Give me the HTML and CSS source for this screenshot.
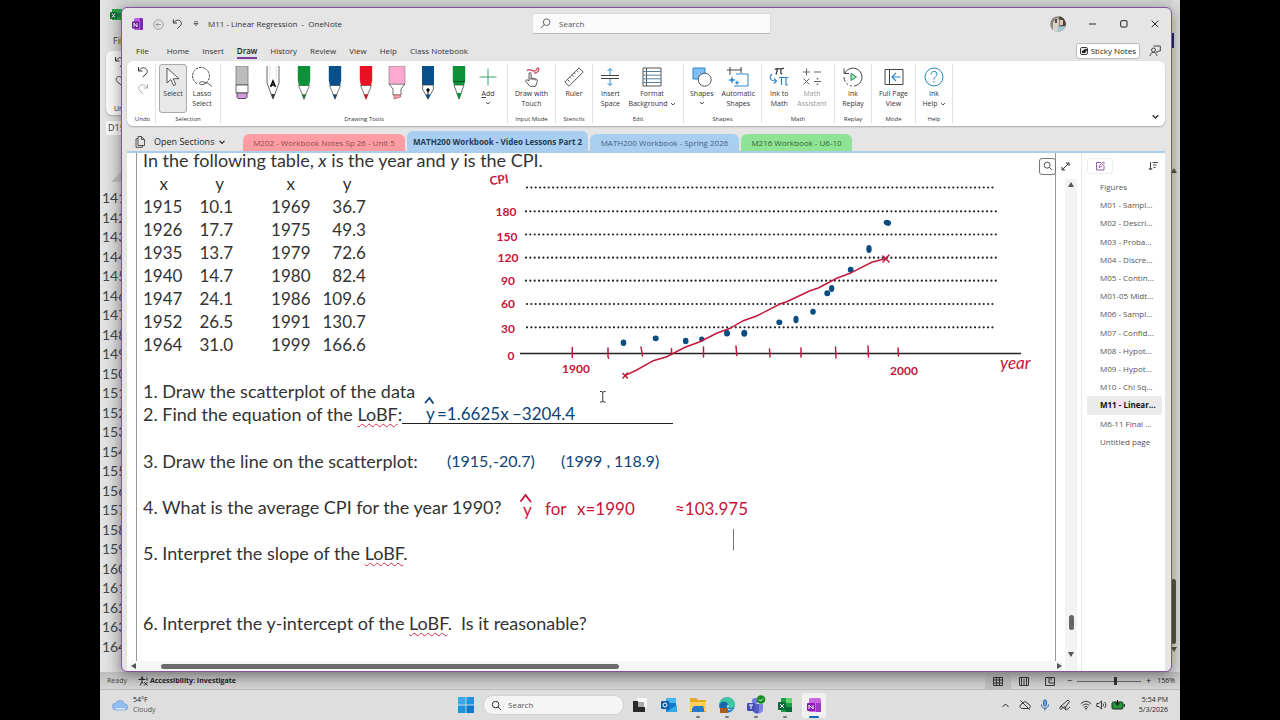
FILE: index.html
```html
<!DOCTYPE html>
<html lang="en">
<head>
<meta charset="utf-8">
<title>M11 - Linear Regression - OneNote</title>
<link rel="stylesheet" href="styles.css">
</head>
<body>
<svg class="defs" width="0" height="0" aria-hidden="true">
  <symbol id="pen" viewBox="0 0 14 34">
    <path d="M1.500 19.500L7 32.500l5.500-13z" fill="#fff" stroke="#555" stroke-width=".8"/>
    <path d="M.8 0h12.400v14.500l-1.200 5H2L.8 14.500z" fill="currentColor"/>
    <path d="M5 28.500h4L7 33.500z" fill="currentColor" stroke="#333" stroke-width=".3"/>
  </symbol>
  <symbol id="chev" viewBox="0 0 8 8"><path d="M1.500 2.800L4 5.300l2.500-2.500" fill="none" stroke="currentColor" stroke-width="1.200"/></symbol>
  <symbol id="undo" viewBox="0 0 12 12"><path d="M1.500 1v4h4M1.800 4.800C4 1.500 7 1 9 2.800s1.500 3.700 0 5.200L5.800 11" fill="none" stroke="currentColor"/></symbol>
  <symbol id="lens" viewBox="0 0 12 12"><circle cx="5" cy="5" r="3.600" fill="none" stroke="currentColor"/><path d="M7.700 7.700L11 11" stroke="currentColor"/></symbol>
</svg>

<div class="desktop">
  <section class="excel" aria-label="Excel">
    <div class="excel-edge">
      <svg class="excel-logo" viewBox="0 0 12 12"><path d="M2 0h9a1 1 0 011 1v10H2z" fill="#27a345"/><path d="M2 4h10v4H2z" fill="#138038"/><rect y="3" width="7" height="7" rx="1" fill="#0b6630"/><path d="M2 4.500l3 4M5 4.500l-3 4" stroke="#fff"/></svg>
      <span class="excel-file">File</span>
      <div class="excel-ribbon">
        <svg width="12" height="12"><use href="#undo"/></svg>
        <svg width="12" height="12" viewBox="0 0 12 12"><path d="M11 9L7 11 3 7.500C1 5 3 2 5.500 2.500L9 4" fill="none" stroke="#444"/></svg>
        <span>Undo</span>
      </div>
      <div class="excel-name">D155</div>
      <svg class="corner" width="10" height="10" viewBox="0 0 10 10"><path d="M10 0v10H0z" fill="#bdbdbd"/></svg>
    </div>
    <ol class="rows">
      <li>141</li><li>142</li><li>143</li><li>144</li><li>145</li><li>146</li><li>147</li><li>148</li><li>149</li><li>150</li><li>151</li><li>152</li><li>153</li><li>154</li><li>155</li><li>156</li><li>157</li><li>158</li><li>159</li><li>160</li><li>161</li><li>162</li><li>163</li><li>164</li>
    </ol>
    <div class="excel-right"><i class="navy"></i><i class="up"></i><i class="thumb"></i><i class="down"></i></div>
  </section>

  <section class="onenote">
    <header class="titlebar">
      <svg width="11" height="12" viewBox="0 0 11 12"><rect x="2" width="9" height="12" rx="1.500" fill="#b45be0"/><path d="M8 0h1.500A1.500 1.500 0 0111 1.500v9A1.500 1.500 0 019.500 12H8z" fill="#7a28b8"/><rect y="3.500" width="7" height="7" rx="1" fill="#65189a"/><path d="M2 9V5l3 4V5" fill="none" stroke="#fff" stroke-width=".9"/></svg>
      <button class="icon back" aria-label="Back"><svg width="11" height="11" viewBox="0 0 11 11" fill="none" stroke="#999"><circle cx="5.500" cy="5.500" r="4.700"/><path d="M8 5.500H3M5 3.500l-2 2 2 2"/></svg></button>
      <button class="icon" aria-label="Undo"><svg width="11" height="12"><use href="#undo"/></svg></button>
      <button class="icon more" aria-label="Customize"><svg width="6" height="6" viewBox="0 0 6 6" fill="none" stroke="#444" stroke-width=".8"><path d="M1 .8h4M1 2.500h4L3 4.800z"/></svg></button>
      <h1>M11 - Linear Regression&nbsp; -&nbsp; OneNote</h1>
      <label class="search"><svg width="11" height="11" viewBox="0 0 12 12"><circle cx="7.200" cy="4.600" r="3.600" fill="none" stroke="#555"/><path d="M4.500 7.200L1 11" stroke="#555"/></svg><input type="text" placeholder="Search" aria-label="Search"></label>
      <div class="wincontrols">
        <svg width="16" height="16" viewBox="0 0 16 16"><clipPath id="av"><circle cx="8" cy="8" r="7.800"/></clipPath><g clip-path="url(#av)"><path fill="#8d8a80" d="M0 0h16v16H0z"/><path fill="#4b4039" d="M9 0h7v12l-5-2z"/><path fill="#d9d6cf" d="M6 2l3 2-1 12H3V7z"/><path fill="#e9c7ae" d="M10 4h3v5h-3z"/><path fill="#9dcbd4" d="M8 11l7-1v6H7z"/><path fill="#54493f" d="M5 3h2v4H5z"/></g></svg>
        <button class="icon" aria-label="Minimize"><svg width="8" height="8"><path d="M0 4h7" stroke="#222"/></svg></button>
        <button class="icon" aria-label="Maximize"><svg width="8" height="8"><rect x=".7" y=".7" width="6.300" height="6.300" rx="1" fill="none" stroke="#222"/></svg></button>
        <button class="icon" aria-label="Close"><svg width="8" height="8"><path d="M.7.7l6.500 6.500M7.200.7L.7 7.200" stroke="#222"/></svg></button>
      </div>
    </header>

    <nav class="menu">
      <button class="file">File</button><button>Home</button><button>Insert</button><button class="active">Draw</button><button>History</button><button>Review</button><button>View</button><button>Help</button><button>Class Notebook</button>
      <div class="menu-right">
        <button class="sticky"><svg width="8" height="8" viewBox="0 0 8 8"><rect x=".6" y=".6" width="6.800" height="6.800" rx="1" fill="none" stroke="#222"/><path d="M2 6V4l3-2h2v1L5 6z" fill="#222"/></svg>Sticky Notes</button>
        <button class="icon" aria-label="Share feedback"><svg width="12" height="12" viewBox="0 0 12 12" fill="none" stroke="#333" stroke-width=".9"><circle cx="4.500" cy="5" r="2"/><path d="M1 11c.3-2.500 1.500-3.500 3.500-3.500S7.700 8.500 8 11M4.500 1h6.800v5H9.500L8 7.500V6"/></svg></button>
      </div>
    </nav>

    <div class="ribbon">
      <div class="group g-undo">
        <div class="tools stack">
          <button class="icon" aria-label="Undo"><svg width="12" height="12"><use href="#undo"/></svg></button>
          <button class="icon redo" aria-label="Redo"><svg width="12" height="12"><use href="#undo"/></svg></button>
        </div><span class="cap">Undo</span>
      </div>
      <div class="group g-selection">
        <div class="tools">
          <button class="tool selected"><svg width="20" height="20" viewBox="0 0 20 20"><path d="M4 1v15l4-3.500 2.500 6 2.300-1-2.600-5.800H16z" fill="#fff" stroke="#444" stroke-width=".9"/></svg>Select</button>
          <button class="tool"><svg width="22" height="20" viewBox="0 0 22 20" fill="none" stroke="#444"><path d="M6 16.500a8.500 8.500 0 1110-1.500" stroke-dasharray="2.500 .9"/><path d="M16 15c-2 3-8 3.500-7.500 1.200S15 14 21 19.500" stroke-width=".9"/></svg>Lasso<br>Select</button>
        </div><span class="cap">Selection</span>
      </div>
      <div class="group g-pens">
        <div class="tools">
          <button class="pen" aria-label="Eraser"><svg width="14" height="34" viewBox="0 0 14 34"><path d="M1 0h12v19H1z" fill="#bcbcbc" stroke="#777" stroke-width=".8"/><path d="M1 19h12v8H1z" fill="#fff" stroke="#444" stroke-width=".8"/><path d="M2 27h10v4.500l-1 1H3l-1-1z" fill="#d39be0" stroke="#333" stroke-width=".8"/></svg></button>
          <button class="pen" aria-label="Pencil"><svg width="14" height="34" viewBox="0 0 14 34"><path d="M1 0v17l6 16 6-16V0" fill="#fff" stroke="#555" stroke-width=".9"/><path d="M3.800 0v13M10.200 0v13" stroke="#ddd"/><path d="M5 28h4l-2 5z" fill="#333"/><path d="M4.500 21L7 15l2.500 6M5.500 19h3" fill="none" stroke="#000" stroke-width="1.500"/></svg></button>
          <button class="pen green" aria-label="Green pen"><svg width="14" height="34"><use href="#pen"/></svg></button>
          <button class="pen blue" aria-label="Blue pen"><svg width="14" height="34"><use href="#pen"/></svg></button>
          <button class="pen red" aria-label="Red pen"><svg width="14" height="34"><use href="#pen"/></svg></button>
          <button class="pen" aria-label="Highlighter"><svg width="18" height="34" viewBox="0 0 18 34"><path d="M1 18l4 5v6h8v-6l4-5z" fill="#fff" stroke="#444" stroke-width=".8"/><path d="M1 0h16v18H1z" fill="#ffa9d2" stroke="#777" stroke-width=".6"/><path d="M6 29h6.500v2L6 33z" fill="#ffa0b0" stroke="#a55" stroke-width=".7"/></svg></button>
          <button class="pen blue" aria-label="Fountain pen"><svg width="14" height="34" viewBox="0 0 14 34"><path d="M1 0h12v19H1z" fill="currentColor"/><path d="M2 19l-.5 4L7 33l5.500-10-.5-4z" fill="#fff" stroke="#444" stroke-width=".8"/><path d="M7 24v7" stroke="#000"/><circle cx="7" cy="24" r="1.700"/><path d="M4.500 28.500h5L7 33.500z" fill="currentColor"/></svg></button>
          <button class="pen green" aria-label="Green brush pen"><svg width="14" height="34" viewBox="0 0 14 34"><path d="M2 19l5 14 5-14z" fill="#fff" stroke="#444" stroke-width=".8"/><path d="M.8 0h12.400v15L12 19H2L.8 15z" fill="currentColor"/><path d="M1 15.500h12" stroke="#05561f"/><path d="M4.500 27h5L7 33.500z" fill="currentColor"/></svg></button>
          <button class="tool"><svg width="20" height="20" viewBox="0 0 20 20"><path d="M10 1.500v17M1.500 10h17" stroke="#37a566"/></svg><span><u>A</u>dd</span><svg class="chev" width="6" height="6"><use href="#chev"/></svg></button>
        </div><span class="cap">Drawing Tools</span>
      </div>
      <div class="group g-touch">
        <div class="tools"><button class="tool"><svg width="20" height="20" viewBox="0 0 20 20" fill="none"><path d="M5 4c2-4 5 1 8 0s1-3 3-3 1 5-4 5" stroke="#d2364b" stroke-width="1.100"/><path d="M7 14V6.500c0-1.300 2-1.300 2 0V11l5 1c1.500.5 1.500 1 1 3.500l-1.500 3.800H8L4 14.500c-1-1.500.5-2.500 3-.5zM9 11v2m2-1.500V13m2-1v1.500" stroke="#444" stroke-width=".9"/></svg>Draw with<br>Touch</button></div><span class="cap">Input Mode</span>
      </div>
      <div class="group g-one">
        <div class="tools"><button class="tool"><svg width="20" height="20" viewBox="0 0 20 20" fill="none" stroke="#444" stroke-width=".9"><path d="M15 .8L19.200 5 5 19.200.8 15zM12.500 3.300l2 2M10.200 5.600L11.500 7M8 7.800l2 2M5.700 10.200L7 11.500M3.500 12.500l2 2"/></svg>Ruler</button></div><span class="cap">Stencils</span>
      </div>
      <div class="group g-edit">
        <div class="tools">
          <button class="tool"><svg width="20" height="20" viewBox="0 0 20 20" fill="none"><path d="M1 8.500h18M1 11.500h18" stroke="#444"/><path d="M10 8V1.500M7.500 4L10 1.500 12.500 4M10 12v6.500M7.500 16l2.500 2.500 2.500-2.500" stroke="#2b8fd0"/></svg>Insert<br>Space</button>
          <button class="tool"><svg width="20" height="20" viewBox="0 0 20 20" fill="none"><path d="M1 1h18v18H1zM4.500 1v18" stroke="#555"/><path d="M1 4.500h18M1 8.200h18M1 11.800h18M1 15.500h18" stroke="#577f96"/></svg>Format<br><span class="nowrap">Background <svg width="6" height="6"><use href="#chev"/></svg></span></button>
        </div><span class="cap">Edit</span>
      </div>
      <div class="group g-shapes">
        <div class="tools">
          <button class="tool"><svg width="20" height="20" viewBox="0 0 20 20"><path d="M1 1h12v11H1z" fill="#7fbdf2" stroke="#2f86ce"/><circle cx="12.700" cy="12.700" r="6.500" fill="#fff" stroke="#444" stroke-width=".9"/></svg>Shapes<svg class="chev" width="6" height="6"><use href="#chev"/></svg></button>
          <button class="tool"><svg width="22" height="20" viewBox="0 0 22 20" fill="none"><path d="M3 0v8M0 3h15M14 0v6" stroke="#444"/><path d="M9 7h12v12H7" stroke="#2f86ce"/><path d="M5 9l1 3 3 1-3 1-1 3-1-3-3-1 3-1zM10 13l.7 2 2 .7-2 .7-.7 2-.7-2-2-.7 2-.7z" fill="#2f86ce"/></svg>Automatic<br>Shapes</button>
        </div><span class="cap">Shapes</span>
      </div>
      <div class="group g-math">
        <div class="tools">
          <button class="tool"><svg width="20" height="20" viewBox="0 0 20 20" fill="none"><path d="M6 2.500c2-2 6 .5 9-1.500M8.500 2L7 7.500M12 2l-.3 4 1.500 1.300" stroke="#333" stroke-width="1.200"/><path d="M3 7c-3 3-2.500 7 4 7M5 11.500L7.500 14 5 16.500M10 10.500h9.500M12.500 10.500V18M17 10.500V18h2" stroke="#2f86ce" stroke-width="1.200"/></svg>Ink to<br>Math</button>
          <button class="tool dim"><svg width="20" height="20" viewBox="0 0 20 20" fill="none" stroke="#666"><path d="M1 5h7M4.500 1.500v7M12 5h7M1.500 11.500l6 6M7.500 11.500l-6 6M12 14.500h7"/><path d="M15.500 11v1.500M15.500 16.500V18" stroke-width="1.500"/></svg>Math<br>Assistant</button>
        </div><span class="cap">Math</span>
      </div>
      <div class="group g-one">
        <div class="tools"><button class="tool"><svg width="20" height="20" viewBox="0 0 20 20" fill="none"><path d="M2 6a9 9 0 11-1 4" stroke="#444" stroke-dasharray="37 2 2 2 2 2"/><path d="M1 1.500V6.500h5" stroke="#444"/><path d="M8 6.500v7l5.500-3.500z" fill="#a5e5bd" stroke="#228d53"/></svg>Ink<br>Replay</button></div><span class="cap">Replay</span>
      </div>
      <div class="group g-mode">
        <div class="tools"><button class="tool"><svg width="20" height="20" viewBox="0 0 20 20" fill="none"><path d="M1 2.500h18v15H1zM5.500 2.500v15" stroke="#444"/><path d="M16.500 10h-8M12 6l-4 4 4 4" stroke="#2f86ce" stroke-width="1.100"/></svg>Full Page<br>View</button></div><span class="cap">Mode</span>
      </div>
      <div class="group g-one">
        <div class="tools"><button class="tool"><svg width="20" height="20" viewBox="0 0 20 20" fill="none" stroke="#2488ba"><circle cx="10" cy="10" r="9"/><path d="M7 7.500c0-4 6-4 6-.5 0 2.500-3 2.500-3 5.500M10 14v1.700"/></svg>Ink<br><span class="nowrap">Help <svg width="6" height="6"><use href="#chev"/></svg></span></button></div><span class="cap">Help</span>
      </div>
      <button class="icon collapse" aria-label="Collapse ribbon"><svg width="9" height="9"><use href="#chev"/></svg></button>
    </div>

    <div class="sections">
      <button class="open"><svg width="10" height="12" viewBox="0 0 10 12" fill="none" stroke="#444" stroke-width=".9"><path d="M3 .5h3.500l3 3v6H3zM6.500.5v3h3M3 2.500L1 3v8.300h6.500V9.500"/></svg>Open Sections<svg width="8" height="8"><use href="#chev"/></svg></button>
      <button class="tab pink">M202 - Workbook Notes Sp 26 - Unit 5</button>
      <button class="tab current">MATH200 Workbook - Video Lessons Part 2</button>
      <button class="tab sky">MATH200 Workbook - Spring 2026</button>
      <button class="tab lime">M216 Workbook - U6-10</button>
    </div>

    <div class="body">
      <div class="canvas">
        <main class="note">
          <p class="intro">In the following table, <i>x</i> is the year and <i>y</i> is the CPI.</p>
          <div class="tables">
            <table>
              <tr><th>x</th><th>y</th></tr>
              <tr><td>1915</td><td>10.1</td></tr><tr><td>1926</td><td>17.7</td></tr><tr><td>1935</td><td>13.7</td></tr><tr><td>1940</td><td>14.7</td></tr><tr><td>1947</td><td>24.1</td></tr><tr><td>1952</td><td>26.5</td></tr><tr><td>1964</td><td>31.0</td></tr>
            </table>
            <table class="wide">
              <tr><th>x</th><th>y</th></tr>
              <tr><td>1969</td><td>36.7</td></tr><tr><td>1975</td><td>49.3</td></tr><tr><td>1979</td><td>72.6</td></tr><tr><td>1980</td><td>82.4</td></tr><tr><td>1986</td><td>109.6</td></tr><tr><td>1991</td><td>130.7</td></tr><tr><td>1999</td><td>166.6</td></tr>
            </table>
          </div>
          <div class="questions">
            <p>1. Draw the scatterplot of the data</p>
            <p class="fill first">2. Find the equation of the <span class="sp">LoBF</span>:<span class="blank"></span></p>
            <p class="spaced">3. Draw the line on the scatterplot:</p>
            <p class="spaced">4. What is the average CPI for the year 1990?</p>
            <p class="far">5. Interpret the slope of the <span class="sp">LoBF</span>.</p>
            <p>6. Interpret the y-intercept of the <span class="sp">LoBF</span>.&nbsp; Is it reasonable?</p>
          </div>
          <svg class="ink" width="919" height="507" viewBox="137 153 919 507">
            <g class="grid"><path d="M527 187.500H996M526 211.300H996M526 234.500H996M526 257.700H996M526 280.700H996M527 304H996M527 327.300H996"/></g>
            <path d="M520 353.500H1021" stroke="#222" stroke-width="1.300"/>
            <g fill="#0b4d80">
              <ellipse cx="623.500" cy="342.700" rx="2.800" ry="3.200"/><ellipse cx="655.700" cy="338.300" rx="3" ry="2.900"/><ellipse cx="685.700" cy="341" rx="2.800" ry="3.300"/><ellipse cx="701.700" cy="339" rx="2.600" ry="2.600"/><ellipse cx="727" cy="333.300" rx="3" ry="3.300"/><ellipse cx="744.300" cy="333.300" rx="3" ry="3.500"/><ellipse cx="779.300" cy="322.300" rx="3" ry="2.800"/><ellipse cx="796" cy="319.500" rx="2.600" ry="3.800"/><ellipse cx="813" cy="311.700" rx="2.800" ry="3"/><ellipse cx="827.300" cy="293.300" rx="3" ry="3"/><ellipse cx="831.700" cy="288.500" rx="2.600" ry="3.400"/><ellipse cx="850.700" cy="269.700" rx="2.900" ry="3"/><ellipse cx="869" cy="249" rx="2.700" ry="4"/><ellipse cx="887.300" cy="222.700" rx="3.800" ry="2.900" transform="rotate(20 887 223)"/>
            </g>
            <g class="stroke-red">
              <path d="M572.300 347.500v10M608 348v9l.7 1M641 347l1.500 9M671.500 348.500v6M703.500 347v10M736 346l.8 9.500M769.500 349l.5 8M801 348v9M835.500 347l.5 11M868 346l.5 11M898 348l.5 8"/>
              <path d="M625 375.700l11.700-5.700 16.600-9.300 13.400-4 18.300-9.400 15-5.600 16.700-8.400 13.300-5 13.300-7.600 13.400-4.700L780 304l6.700-2.300 23.300-11 8.300-2.700 18.400-9.700 13.300-5 21.700-11 13.300-3.600"/>
              <path d="M623 373.500l4.500 4.500M627.500 373l-4.500 5M883 256l6 6M889 255l-6 7"/>
            </g>
            <g class="hand red tick">
              <text x="499" y="184" transform="rotate(-8 499 180)">CPI</text>
              <text x="506" y="216">180</text><text x="507" y="241">150</text><text x="508" y="262">120</text><text x="508" y="285">90</text><text x="508" y="308">60</text><text x="508" y="333">30</text><text x="511" y="360">0</text>
              <text x="576" y="373">1900</text><text x="904" y="375">2000</text>
            </g>
            <g class="hand red"><text x="1000" y="369" font-style="italic">year</text></g>
            <g class="hand navy-ink">
              <text x="426" y="420">y</text><text x="437" y="420">=1.6625x</text><text x="512" y="420">–3204.4</text>
              <path d="M425.500 402.500l4-4.500 3.500 5"/>
            </g>
            <g class="hand navy-ink small">
              <text x="447" y="467">(1915,</text><text x="493" y="467">-20.7)</text><text x="561" y="467">(1999 ,</text><text x="614" y="467">118.9)</text>
            </g>
            <g class="hand red">
              <text x="523" y="516">y</text><text x="545" y="515">for</text><text x="577" y="515">x=1990</text><text x="675" y="515">≈103.975</text>
              <path d="M521 501l4.500-6 5 6.500"/>
            </g>
            <path d="M733.500 529v21.500" stroke="#777"/>
            <path d="M600 391.500h2l.8 1 .8-1h2M602.800 392v9M600 402h2l.8-1 .8 1h2" fill="none" stroke="#222" stroke-width=".9"/>
          </svg>
        </main>
        <div class="hbar"><i class="left"></i><i class="track"></i><i class="right"></i></div>
      </div>
      <div class="viewtools">
        <div class="row"><button class="find" aria-label="Find"><svg width="10" height="10"><use href="#lens"/></svg></button><button class="icon" aria-label="Expand"><svg width="9" height="9" viewBox="0 0 9 9" fill="none" stroke="#333"><path d="M1 8l7-7M5 1h3v3M1 5v3h3"/></svg></button></div>
        <div class="vbar"><i class="up"></i><i class="thumb"></i><i class="down"></i></div>
      </div>
      <aside class="pages">
        <div class="row"><button class="add" aria-label="Add page"><svg width="10" height="10" viewBox="0 0 10 10" fill="none" stroke="#8c4ba8" stroke-width=".9"><path d="M6 1.500H1.500V9H9V4.500M4 6.500l.4-1.800L8.300.8l1.200 1.200-3.800 4z"/></svg></button><button class="icon" aria-label="Sort pages"><svg width="10" height="10" viewBox="0 0 10 10" fill="none" stroke="#333" stroke-width=".9"><path d="M2.500 1v8M.8 7l1.700 2 1.700-2M4.500 1.500H10M5 4h3.500M5.500 6.500h2"/></svg></button></div>
        <ul>
          <li>Figures</li><li>M01 - Sampl...</li><li>M02 - Descri...</li><li>M03 - Proba...</li><li>M04 - Discre...</li><li>M05 - Contin...</li><li>M01-05 Midt...</li><li>M06 - Sampl...</li><li>M07 - Confid...</li><li>M08 - Hypot...</li><li>M09 - Hypot...</li><li>M10 - Chi Sq...</li><li class="on">M11 - Linear...</li><li>M6-11 Final ...</li><li>Untitled page</li>
        </ul>
      </aside>
    </div>
  </section>

  <div class="status">
    <span class="ready">Ready</span>
    <svg width="10" height="10" viewBox="0 0 10 10" fill="none" stroke="#222"><circle cx="4" cy="2" r="1"/><path d="M.5 3.500h7M4 4v2l-2 3.500M4 6l1 1.500M6 6l3.500 3.500M9.500 6L6 9.500M9 1.500v3"/></svg>
    <b>Accessibility: Investigate</b>
    <div class="views">
      <button class="view on" aria-label="Normal"><svg width="10" height="9" viewBox="0 0 10 9" fill="none" stroke="#333"><path d="M.5.5h9v8h-9zM.5 3h9M.5 6h9M3.500.5v8M6.500.5v8"/></svg></button>
      <button class="view" aria-label="Page layout"><svg width="10" height="9" viewBox="0 0 10 9" fill="none" stroke="#333"><path d="M.5.5h9v8h-9zM2.500 1v7.500M7.500 1v7.500M4 3h2M4 5h2M4 7h2"/></svg></button>
      <button class="view" aria-label="Page break"><svg width="10" height="9" viewBox="0 0 10 9" fill="none" stroke="#333"><path d="M.5.5h9v8h-9zM4 .5V6h5.500M6 .5v3"/></svg></button>
    </div>
    <span class="sign">−</span><input class="zoom" type="range" min="0" max="100" value="60" aria-label="Zoom"><span class="sign">+</span><span class="pct">156%</span>
  </div>

  <footer class="taskbar">
    <div class="weather"><svg width="16" height="12" viewBox="0 0 16 12"><path d="M4 11a3.500 3.500 0 010-7 4.500 4.500 0 018.500 1A3 3 0 0113 11z" fill="#94bdf0" stroke="#6e9cdd" stroke-width=".7"/><path d="M3 9h10.500a2 2 0 01-.5 1.500H4z" fill="#d9eaff"/></svg><span>54°F<br><em>Cloudy</em></span></div>
    <div class="apps">
      <button class="start" aria-label="Start"><svg width="16" height="16" viewBox="0 0 16 16" fill="#128ad6"><path d="M0 0h7.600v7.600H0z" fill="#35abea"/><path d="M8.400 0H16v7.600H8.400zM0 8.400h7.600V16H0z" fill="#1c96dd"/><path d="M8.400 8.400H16V16H8.400z" fill="#087bcd"/></svg></button>
      <label class="tasksearch"><svg width="11" height="11"><use href="#lens"/></svg><input type="text" placeholder="Search" aria-label="Search the computer"></label>
      <button class="app" aria-label="Task view"><svg width="16" height="16" viewBox="0 0 16 16"><path d="M5 1h10v10H5z" fill="#f8f8f8"/><path d="M1 4h5v6h7v5H1z" fill="#292929"/><path d="M6 5h6v5H6z" fill="#aaa"/></svg></button>
      <button class="app" aria-label="Outlook"><svg width="16" height="16" viewBox="0 0 16 16"><path d="M5 1h10v14H5z" fill="#1479c9"/><path d="M5 1h10v5H5z" fill="#46b6ee"/><path d="M5 15l11-7v7z" fill="#34a8e8"/><rect y="4" width="8" height="8" rx="1" fill="#0e5da9"/><circle cx="4" cy="8" r="2" fill="none" stroke="#fff"/></svg></button>
      <button class="app running" aria-label="File Explorer"><svg width="16" height="16" viewBox="0 0 16 16"><path d="M0 1h6l2 2h8v12H0z" fill="#e7a91e"/><path d="M0 5h16v9H0z" fill="#ffd257"/><path d="M2 11.500L4 9h9l1 2.500V15H2z" fill="#227bcb"/></svg></button>
      <button class="app running" aria-label="Edge"><svg width="16" height="16" viewBox="0 0 16 16"><circle cx="8" cy="8" r="7.800" fill="#1274bd"/><path d="M.5 8C0 2 6 0 9 .3c5 .5 8 5 6.500 9-1 2.500-5 2.500-6 1C12 7 5 3 .5 8z" fill="#3fc7a1"/><path d="M8.500 7c2 1 1.500 3 .5 4 1 2 4 2 6 0-2 3-6 3-7 1z" fill="#d7eef6"/><path d="M.5 8c2-5 8-4 8.500 0-4-1-4 4 0 7-5 2-9-2-8.500-7z" fill="#1768ab"/><path d="M1 11h8v5H1z" fill="#a75e20"/></svg></button>
      <button class="app running" aria-label="Teams"><svg width="20" height="20" viewBox="0 0 20 20"><circle cx="9" cy="6" r="3" fill="#6f78dc"/><path d="M4 9h13v6c0 4-9 5-11 0z" fill="#7b83eb"/><path d="M8 9h5v9c-3 1-5 0-6-2z" fill="#555dc5"/><rect x="1" y="8" width="8" height="8" rx="1" fill="#454cb4"/><path d="M3 10h4M5 10v4" stroke="#fff"/><circle cx="15" cy="4.500" r="4.300" fill="#138c20"/><path d="M13 4.500l1.500 1.500L17 3.500" fill="none" stroke="#fff"/></svg></button>
      <button class="app running" aria-label="Excel"><svg width="16" height="16" viewBox="0 0 16 16"><path d="M4 1h11v14H4z" fill="#1d9c4b"/><path d="M9 1h6v5H9z" fill="#66d36f"/><path d="M9 10h6v5H9z" fill="#086c35"/><rect x="1" y="5" width="8" height="8" rx="1" fill="#0b6733"/><path d="M3 7l4 4M7 7l-4 4" stroke="#fff"/></svg></button>
      <button class="app focus" aria-label="OneNote"><svg width="16" height="16" viewBox="0 0 16 16"><rect x="3" y="1" width="12" height="14" rx="1.500" fill="#c967e3"/><path d="M10 6h5v9h-5z" fill="#9b36c7"/><rect x="1" y="6" width="8" height="8" rx="1" fill="#8b17b5"/><path d="M3 12V8l4 4V8" fill="none" stroke="#fff"/></svg></button>
    </div>
    <div class="tray">
      <svg width="9" height="9" viewBox="0 0 9 9" fill="none" stroke="#222"><path d="M1.500 6l3-3 3 3"/></svg>
      <svg width="12" height="12" viewBox="0 0 12 12" fill="none" stroke="#222" stroke-width=".9"><path d="M2.500 9.500C0 8 1 5 3.200 5 4 2 8 2 8.800 5c3 0 3 4 .7 4.500zM1.500 1.500l9.500 9.500"/></svg>
      <svg width="10" height="12" viewBox="0 0 10 12" fill="none" stroke="#26649f"><rect x="3.500" y="1" width="3" height="6" rx="1.500" fill="#6ba8e5"/><path d="M1.500 5.500c0 5 7 5 7 0M5 9v2.500"/></svg>
      <svg width="12" height="12" viewBox="0 0 12 12" fill="none" stroke="#222" stroke-width=".9"><path d="M2 7l7-6 1.500 1.500-5 7zM2 7c-2 2-1 4 .5 3s3-3 4-2-1 3 .5 3S9 9.500 11 8"/></svg>
      <div class="quick">
        <svg width="12" height="10" viewBox="0 0 12 10" fill="none" stroke="#222" stroke-width=".9"><path d="M.8 4c3-3.500 7.400-3.500 10.400 0M2.500 5.800c2-2.300 5-2.300 7 0M4.200 7.500c1-1.200 2.600-1.200 3.600 0"/><circle cx="6" cy="8.800" r=".5"/></svg>
        <svg width="11" height="10" viewBox="0 0 11 10" fill="none" stroke="#222" stroke-width=".9"><path d="M.8 3.500h2L5.500 1v8L2.800 6.500h-2zM7 3.500c.8 1 .8 2 0 3M8.500 2c1.800 2 1.800 4 0 6"/></svg>
        <svg width="14" height="10" viewBox="0 0 14 10"><rect x="1" y="2" width="11" height="7" rx="1.500" fill="#23963a" stroke="#222"/><path d="M13.300 4v3M6.500 0v4M4.500 3l2 2.500L8.500 3" stroke="#111" fill="none"/></svg>
      </div>
      <time>5:54 PM<br>5/3/2026</time>
    </div>
  </footer>
</div>
</body>
</html>
```

FILE: styles.css
```css
* { box-sizing: border-box; }
body { margin: 0; background: #000; color: #333; font: 8px/10px "Open Sans", "Noto Sans", sans-serif; }
button, input { font: inherit; color: inherit; border: 0; background: none; padding: 0; margin: 0; }
svg { display: block; flex: none; }
p, h1, ul, ol { margin: 0; padding: 0; font-size: inherit; font-weight: inherit; list-style: none; }
.defs { position: absolute; }
.icon { display: flex; }
.nowrap { white-space: nowrap; display: flex; align-items: center; gap: 2px; }

.desktop { position: relative; display: flex; flex-direction: column; height: 100vh; min-height: 720px; margin: 0 100px; background: #e4e7e6; overflow: hidden; }

.excel { flex: 1; display: flex; flex-direction: column; position: relative; overflow: hidden; background: linear-gradient(90deg, #e4e5e5, #d2d2d2 22px); }
.excel-edge { height: 188px; display: flex; flex-direction: column; }
.excel-logo { width: 12px; height: 12px; margin: 9px 0 0 10px; }
.excel-file { margin: 15px 0 0 13px; font-size: 9px; }
.excel-ribbon { width: 200px; height: 64px; margin: 5px 0 0 6px; padding: 5px 0 0 8px; display: flex; flex-direction: column; gap: 6px; background: #f5f5f5; border-radius: 6px; box-shadow: 0 1px 2px #aaa; }
.excel-ribbon span { margin-top: 12px; font-size: 7px; }
.excel-name { width: 80px; margin: 6px 0 0 6px; padding: 2px; background: #f5f5f5; font-size: 9px; border-radius: 2px; }
.corner { margin: 37px 0 0 11px; }
.rows { flex: 1; display: flex; flex-direction: column; margin-bottom: 16px; padding-left: 2px; font: 14px/19px Lato, sans-serif; color: #444; }
.rows li { flex: 1; }
.excel-right { position: absolute; top: 0; right: 0; bottom: 0; width: 9px; background: #d8d8d8; }
.excel-right i { position: absolute; left: 0; }
.excel-right .navy { top: 33px; width: 3px; height: 15px; background: #1e2d5c; }
.excel-right .up { top: 168px; border: 3px solid transparent; border-top: 0; border-bottom: 5px solid #555; }
.excel-right .thumb { top: 579px; width: 5px; height: 65px; border-radius: 3px; background: #555; }
.excel-right .down { top: 647px; border: 3px solid transparent; border-bottom: 0; border-top: 5px solid #555; }

.onenote { position: absolute; top: 7px; left: 21px; right: 8px; bottom: 48px; display: flex; flex-direction: column; padding: 0 6px 0 5px; border: 1px solid #8552a1; border-radius: 6px; background: #e5e5e5; box-shadow: 0 3px 14px rgba(0,0,0,.4); overflow: hidden; }

.titlebar { position: relative; display: flex; align-items: center; height: 32px; padding: 0 6px 0 5px; }
.titlebar .back { margin: 0 8px 0 10px; }
.titlebar .more { margin: 0 9px 0 10px; }
.search { position: absolute; left: 405px; top: 5px; width: 239px; height: 21px; display: flex; align-items: center; gap: 8px; padding: 0 7px; background: #fafafa; border: 1px solid #ddd; border-bottom-color: #bbb; border-radius: 3px; }
.search input, .tasksearch input { width: 100px; outline: 0; }
input::placeholder { color: #555; opacity: 1; }
.wincontrols { margin-left: auto; display: flex; align-items: center; gap: 23px; }

.menu { display: flex; align-items: center; gap: 13px; height: 21px; padding: 0 4px 0 9px; }
.menu > button { height: 16px; padding-top: 2px; border-bottom: 2px solid transparent; }
.menu .file { margin-right: 5px; }
.menu > .active { font-weight: 600; color: #222; border-color: #7a3f98; }
.menu-right { margin-left: auto; display: flex; align-items: center; gap: 9px; }
.sticky { display: flex; align-items: center; gap: 3px; height: 16px; padding: 0 3px; background: #fff; border: 1px solid #bbb; border-radius: 3px; color: #222; }

.ribbon { display: flex; height: 65px; padding: 2px 0 1px 3px; background: #fff; border-radius: 6px; box-shadow: 0 1px 2px #aaa; }
.group { display: flex; flex-direction: column; align-items: center; justify-content: space-between; border-right: 1px solid #e1e1e1; margin: 1px 0 2px; }
.tools { display: flex; justify-content: center; }
.tool { display: flex; flex-direction: column; align-items: center; height: 49px; padding: 2px 3px 0; font-size: 7px; line-height: 10px; text-align: center; border: 1px solid transparent; border-radius: 3px; }
.tool > svg:first-child { margin-bottom: 2px; }
.tool .chev { margin-top: 1px; }
.selected { background: #e8e8e8; border-color: #aaa; }
.dim { color: #999; }
.cap { font-size: 6px; line-height: 8px; white-space: nowrap; }
.stack { flex-direction: column; gap: 5px; padding-top: 2px; }
.redo { transform: scaleX(-1); color: #aaa; }
.g-undo { width: 26px; }
.g-selection { width: 65px; }
.g-pens { width: 287px; }
.g-touch { width: 48px; }
.g-one { width: 37px; }
.g-edit { width: 91px; }
.g-shapes { width: 78px; }
.g-math { width: 73px; }
.g-mode { width: 44px; }
.pen { display: flex; justify-content: center; width: 31px; padding-top: 2px; }
.green { color: #0c9138; }
.blue { color: #08508c; }
.red { color: #e81123; }
.collapse { margin: auto 5px 4px auto; }

.sections { display: flex; align-items: flex-end; gap: 2px; height: 27px; padding-left: 8px; border-bottom: 2px solid #a9cdea; }
.open { display: flex; align-items: center; gap: 4px; width: 106px; height: 19px; font-size: 9px; color: #222; }
.open svg:first-child { margin-right: 5px; }
.tab { height: 17px; padding-top: 1px; border-radius: 6px 6px 0 0; white-space: nowrap; }
.pink { width: 162px; background: #ff9da3; color: #8c4a50; }
.current { width: 181px; height: 20px; background: #a9cff0; font-weight: 700; color: #243c52; }
.sky { width: 149px; background: #a9cff0; color: #45627c; }
.lime { width: 111px; background: #8fe394; color: #33663a; }

.body { flex: 1; display: flex; min-height: 0; background: #fff; }
.canvas { flex: 1; display: flex; flex-direction: column; min-width: 0; }
.note { position: relative; flex: 1; margin-left: 9px; border: solid #999; border-width: 0 1px; padding-left: 6px; overflow: hidden; font: 18px/23px Lato, Carlito, sans-serif; font-variant-ligatures: none; color: #333; }
.intro { line-height: 15px; margin-bottom: 4px; }
.tables { display: flex; gap: 38px; font-size: 17px; }
.note table { border-collapse: collapse; }
.note th, .note td { padding: 0; font-weight: 400; text-align: right; }
.note th { text-align: center; padding-left: 2px; }
.note td + td { padding-left: 17px; }
.note th + th { padding-left: 24px; }
.note .wide th { padding-left: 0; }
.note .wide td + td { padding-left: 12px; }
.note .wide th + th { padding-left: 18px; }
.questions { padding-top: 24px; }
.questions .first { margin-bottom: 24px; }
.questions .spaced { margin-bottom: 23px; }
.questions .far { margin-bottom: 47px; }
.fill { display: flex; white-space: pre; }
.blank { width: 271px; height: 21px; border-bottom: 1px solid #222; }
.sp { text-decoration: underline wavy #d32f3f 1px; text-underline-offset: 2px; }
.ink { position: absolute; left: 0; top: 0; }
.grid path { stroke: #222; stroke-width: 2.200; stroke-linecap: round; stroke-dasharray: 0 4.350; }
.stroke-red path { fill: none; stroke: #c3183c; stroke-width: 1.500; stroke-linecap: round; }
.hand { font: 17px Lato, sans-serif; }
.hand.small { font-size: 16px; }
.hand path { fill: none; stroke: currentColor; stroke-width: 1.800; stroke-linecap: round; }
.hand.red { fill: #c8143a; color: #c8143a; }
.navy-ink { fill: #0b4478; color: #0b4478; }
.hand.tick { font-size: 12px; font-weight: 700; text-anchor: middle; }

.hbar { display: flex; align-items: center; height: 10px; background: #f7f7f8; padding-left: 4px; margin-right: -6px; }
.hbar .left { border: 3px solid transparent; border-left: 0; border-right: 5px solid #555; }
.hbar .track { width: 458px; height: 5px; margin-left: 25px; border-radius: 3px; background: #6b6b6d; }
.hbar .right { margin-left: auto; border: 3px solid transparent; border-right: 0; border-left: 5px solid #555; }
.viewtools { width: 26px; display: flex; flex-direction: column; align-items: flex-end; border-right: 1px solid #e8e8e8; padding-right: 4px; }
.viewtools .row { display: flex; align-items: center; gap: 5px; height: 26px; padding-right: 7px; }
.find { position: relative; display: flex; align-items: center; justify-content: center; width: 17px; height: 17px; background: #fff; border: 1px solid #777; border-radius: 3px; }
.vbar { flex: 1; width: 12px; display: flex; flex-direction: column; align-items: center; background: #f3f3f3; padding: 3px 0 14px; }
.vbar .up { border: 3px solid transparent; border-top: 0; border-bottom: 5px solid #555; }
.vbar .thumb { width: 5px; height: 15px; margin-top: auto; border-radius: 3px; background: #666; }
.vbar .down { margin-top: 22px; border: 3px solid transparent; border-bottom: 0; border-top: 5px solid #555; }
.pages { width: 83px; padding: 5px 3px 0 5px; color: #555; }
.pages .row { display: flex; align-items: center; justify-content: space-between; padding-right: 4px; margin-bottom: 4px; }
.add { display: flex; align-items: center; justify-content: center; width: 26px; height: 16px; border: 1px solid #eee; border-radius: 3px; }
.pages ul { display: flex; flex-direction: column; height: 273px; }
.pages li { flex: 1; line-height: 18px; padding-left: 13px; white-space: nowrap; }
.pages .on { background: #ebebeb; border-radius: 2px; font-weight: 700; color: #111; }

.status { display: flex; align-items: center; height: 18px; padding: 1px 5px 0 7px; background: linear-gradient(#bdbdbd, #d4d4d4); border-bottom: 1px solid #bbb; font-size: 7px; color: #222; }
.ready { margin-right: 11px; color: #444; }
.status b { margin-left: 2px; }
.views { display: flex; margin-left: auto; margin-right: 4px; }
.view { display: flex; align-items: center; justify-content: center; width: 26px; height: 16px; }
.view.on { background: #bcbcbc; }
.sign { font-size: 9px; }
.zoom { width: 64px; height: 10px; margin: 0 5px; appearance: none; background: linear-gradient(#666, #666) center / 100% 1px no-repeat; }
.zoom::-webkit-slider-thumb { appearance: none; width: 3px; height: 8px; background: #333; }
.pct { margin-left: 6px; }

.taskbar { display: grid; grid-template-columns: 1fr auto 1fr; align-items: center; height: 30px; background: #dedede; }
.weather { display: flex; align-items: center; gap: 5px; padding-left: 12px; font-size: 7px; color: #222; }
.weather em { font-style: normal; color: #555; }
.apps { display: flex; align-items: center; padding-left: 4px; }
.tasksearch { display: flex; align-items: center; gap: 6px; width: 141px; height: 20px; margin: 0 4px 0 9px; padding: 0 7px; background: #f5f5f5; border: 1px solid #d2d2d2; border-radius: 10px; color: #222; }
.app { position: relative; display: flex; align-items: center; justify-content: center; width: 24px; height: 25px; margin-right: 5px; border-radius: 3px; }
.app:last-child { margin-right: 0; }
.app.running::after, .app.focus::after { content: ""; position: absolute; bottom: 0; width: 4px; height: 2px; border-radius: 1px; background: #777; }
.app.focus { background: #f1f1f1; }
.app.focus::after { width: 10px; background: #1267b8; }
.tray { display: flex; align-items: center; justify-content: flex-end; gap: 9px; padding-right: 12px; font-size: 7px; color: #222; }
.quick { display: flex; gap: 4px; }
.tray time { text-align: right; margin-left: 5px; }
```
